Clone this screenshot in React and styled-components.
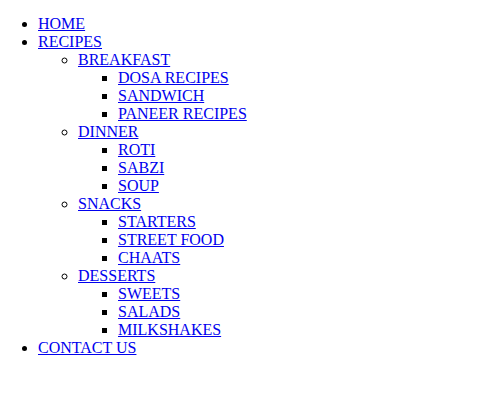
import styled, { createGlobalStyle } from "styled-components";

const GlobalStyle = createGlobalStyle`
  body {
    margin: 0;
    font-family: "Liberation Serif", "Times New Roman", serif;
    font-size: 16px;
    background: #ffffff;
  }
`;

const Menu = styled.ul`
  margin: 15px 0 16px;
  padding-left: 38px;
  list-style-type: disc;
`;

const SubMenu = styled.ul`
  margin: 0;
  padding-left: 40px;
  list-style-type: ${(p) => p.$type};
`;

const Item = styled.li``;

const Link = styled.a`
  color: #0000ee;
  text-decoration: underline;
`;

const menu = [
  { label: "HOME" },
  {
    label: "RECIPES",
    children: [
      { label: "BREAKFAST", children: ["DOSA RECIPES", "SANDWICH", "PANEER RECIPES"] },
      { label: "DINNER", children: ["ROTI", "SABZI", "SOUP"] },
      { label: "SNACKS", children: ["STARTERS", "STREET FOOD", "CHAATS"] },
      { label: "DESSERTS", children: ["SWEETS", "SALADS", "MILKSHAKES"] },
    ],
  },
  { label: "CONTACT US" },
];

function App() {
  return (
    <>
      <GlobalStyle />
      <nav>
        <Menu>
          {menu.map((top) => (
            <Item key={top.label}>
              <Link href="#">{top.label}</Link>
              {top.children && (
                <SubMenu $type="circle">
                  {top.children.map((group) => (
                    <Item key={group.label}>
                      <Link href="#">{group.label}</Link>
                      <SubMenu $type="square">
                        {group.children.map((name) => (
                          <Item key={name}>
                            <Link href="#">{name}</Link>
                          </Item>
                        ))}
                      </SubMenu>
                    </Item>
                  ))}
                </SubMenu>
              )}
            </Item>
          ))}
        </Menu>
      </nav>
    </>
  );
}

export default App;
